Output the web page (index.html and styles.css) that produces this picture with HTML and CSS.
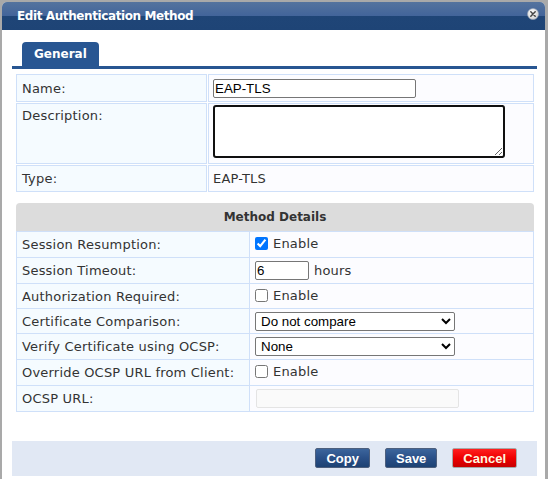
FILE: index.html
```html
<!DOCTYPE html>
<html>
<head>
<meta charset="utf-8">
<link rel="stylesheet" href="styles.css">
</head>
<body>
<div class="dialog">
  <div class="titlebar">
    <span class="title">Edit Authentication Method</span>
    <svg class="close" viewBox="0 0 12 12" width="12" height="12">
      <defs>
        <radialGradient id="cg" cx="40%" cy="35%" r="70%">
          <stop offset="0" stop-color="#ffffff"/>
          <stop offset="1" stop-color="#cfcfcf"/>
        </radialGradient>
      </defs>
      <circle cx="6" cy="6" r="5.5" fill="url(#cg)" stroke="#9aa6b8" stroke-width="0.6"/>
      <path d="M3.8 3.8 L8.2 8.2 M8.2 3.8 L3.8 8.2" stroke="#444" stroke-width="1.5" stroke-linecap="round"/>
    </svg>
  </div>
  <div class="content">
    <div class="tabs"><div class="tab">General</div></div>
    <table class="form">
      <tr class="r-name">
        <td class="lbl">Name:</td>
        <td class="val"><input class="txt name" type="text" value="EAP-TLS"></td>
      </tr>
      <tr class="r-desc">
        <td class="lbl top">Description:</td>
        <td class="val top"><textarea class="area"></textarea></td>
      </tr>
      <tr class="r-type">
        <td class="lbl">Type:</td>
        <td class="val">EAP-TLS</td>
      </tr>
    </table>
    <table class="details">
      <tr><th colspan="2">Method Details</th></tr>
      <tr class="first h27">
        <td class="lbl">Session Resumption:</td>
        <td class="val"><label class="chk"><input type="checkbox" checked>Enable</label></td>
      </tr>
      <tr class="h26">
        <td class="lbl">Session Timeout:</td>
        <td class="val"><input class="txt timeout" type="text" value="6"><span class="unit">hours</span></td>
      </tr>
      <tr class="h25">
        <td class="lbl">Authorization Required:</td>
        <td class="val"><label class="chk"><input type="checkbox">Enable</label></td>
      </tr>
      <tr class="h25">
        <td class="lbl">Certificate Comparison:</td>
        <td class="val"><select class="sel"><option>Do not compare</option></select></td>
      </tr>
      <tr class="h26">
        <td class="lbl">Verify Certificate using OCSP:</td>
        <td class="val"><select class="sel"><option>None</option></select></td>
      </tr>
      <tr class="h26">
        <td class="lbl">Override OCSP URL from Client:</td>
        <td class="val"><label class="chk"><input type="checkbox">Enable</label></td>
      </tr>
      <tr class="h26">
        <td class="lbl">OCSP URL:</td>
        <td class="val"><input class="txt url" type="text" disabled></td>
      </tr>
    </table>
    <div class="footer">
      <button class="btn blue">Copy</button>
      <button class="btn blue">Save</button>
      <button class="btn red">Cancel</button>
    </div>
  </div>
</div>
</body>
</html>
```

FILE: styles.css
```css
* { box-sizing: border-box; }

body {
  margin: 0;
  background: #a9a9a9;
  font-family: "DejaVu Sans", Verdana, sans-serif;
  font-size: 13px;
  letter-spacing: 0.2px;
  color: #333;
}

.dialog {
  margin: 2px 0 0 2px;
  width: 543px;
  height: 477px;
  background: #fff;
  border-radius: 5px 5px 0 0;
}

.titlebar {
  height: 28px;
  display: flex;
  align-items: center;
  justify-content: space-between;
  padding: 0 6px 0 15px;
  border-radius: 5px 5px 0 0;
  background: linear-gradient(#54739e 0%, #42649a 50%, #1f4577 50%, #1e4476 100%);
}

.title {
  color: #fff;
  font-weight: bold;
  font-size: 12px;
  letter-spacing: -0.4px;
}

.close {
  display: block;
  margin-top: -4px;
}

.content {
  padding: 12px 8px 0 10px;
}

.tabs {
  display: flex;
  padding-left: 10px;
  border-bottom: 3px solid #285692;
}

.tab {
  height: 24px;
  line-height: 24px;
  padding: 0 12px;
  background: #285692;
  color: #fff;
  font-weight: bold;
  font-size: 12px;
  letter-spacing: 0;
  border-radius: 4px 4px 0 0;
}

.form {
  margin: 4px 0 0 3px;
  width: 520px;
  border-collapse: separate;
  border-spacing: 1px;
}

.form td {
  border: 1px solid #cfe0f9;
  padding: 0 5px;
  vertical-align: middle;
}

.form td.lbl {
  width: 191px;
  background: #f5fbff;
}

.form td.val {
  background: #fcfcff;
  padding-left: 4px;
}

.form td.top { vertical-align: top; }
.form td.lbl.top { padding-top: 4px; }
.form td.val.top { padding-top: 1px; }

.r-name td { height: 28px; }
.r-desc td { height: 61px; }
.r-type td { height: 27px; }

.txt {
  font-family: "Liberation Sans", Arial, sans-serif;
  font-size: 13.33px;
  letter-spacing: 0;
  color: #000;
  border: 1px solid #767676;
  border-radius: 2px;
  padding: 1px 1px;
  background: #fff;
  vertical-align: middle;
}

.name { width: 203px; height: 19px; }

.area {
  display: block;
  width: 292px;
  height: 53px;
  border: 2px solid #101010;
  border-radius: 3px;
  resize: both;
  background: #fff;
}

.details {
  margin: 10px 0 0 4px;
  width: 518px;
  border-collapse: separate;
  border-spacing: 0;
}

.details th {
  height: 28px;
  padding: 0;
  background: #dcdcdc;
  border-radius: 4px 4px 0 0;
  font-weight: bold;
  font-size: 12px;
  letter-spacing: 0;
  color: #333;
  text-align: center;
}

.details td {
  border-bottom: 1px solid #cfe0f9;
  border-right: 1px solid #cfe0f9;
  padding: 0 5px;
  vertical-align: middle;
}

.details tr.first td { border-top: 1px solid #cfe0f9; }
.details tr.h27 td { height: 27px; }
.details tr.h26 td { height: 26px; }
.details tr.h25 td { height: 25px; }

.details td.lbl {
  width: 234px;
  border-left: 1px solid #cfe0f9;
  background: #f5fbff;
}

.details td.val {
  background: #fcfcff;
}

.chk {
  display: inline-flex;
  align-items: center;
  gap: 5px;
}

.chk input {
  margin: 0;
  width: 13px;
  height: 13px;
}

.timeout { width: 54px; height: 19px; }

.unit { margin-left: 5px; vertical-align: middle; }

.sel {
  width: 200px;
  height: 19px;
  font-family: "Liberation Sans", Arial, sans-serif;
  font-size: 13.33px;
  color: #000;
  border: 1px solid #767676;
  border-radius: 2px;
  background: #fff;
  padding: 0 0 0 1px;
  vertical-align: middle;
}

.url {
  width: 203px;
  height: 19px;
  border-color: #e4e4e4;
  background: #fafafa;
  margin-left: 1px;
}

.footer {
  margin-top: 29px;
  height: 35px;
  background: #e1e8f4;
  display: flex;
  justify-content: flex-end;
  align-items: flex-start;
  gap: 15px;
  padding: 7px 20px 0 0;
}

.btn {
  height: 20px;
  padding: 0 10px;
  font-family: "Liberation Sans", Arial, sans-serif;
  font-weight: bold;
  font-size: 13px;
  color: #fff;
  border-radius: 2px;
  cursor: pointer;
}

.blue {
  border: 1px solid #4d5f7d;
  background: linear-gradient(#3c659c 0%, #2a5088 50%, #1d4273 100%);
}

.red {
  border: 1px solid #a8a8a8;
  background: linear-gradient(#ff2020 0%, #ef0000 50%, #c80000 100%);
  color: #fff8e0;
}
```
